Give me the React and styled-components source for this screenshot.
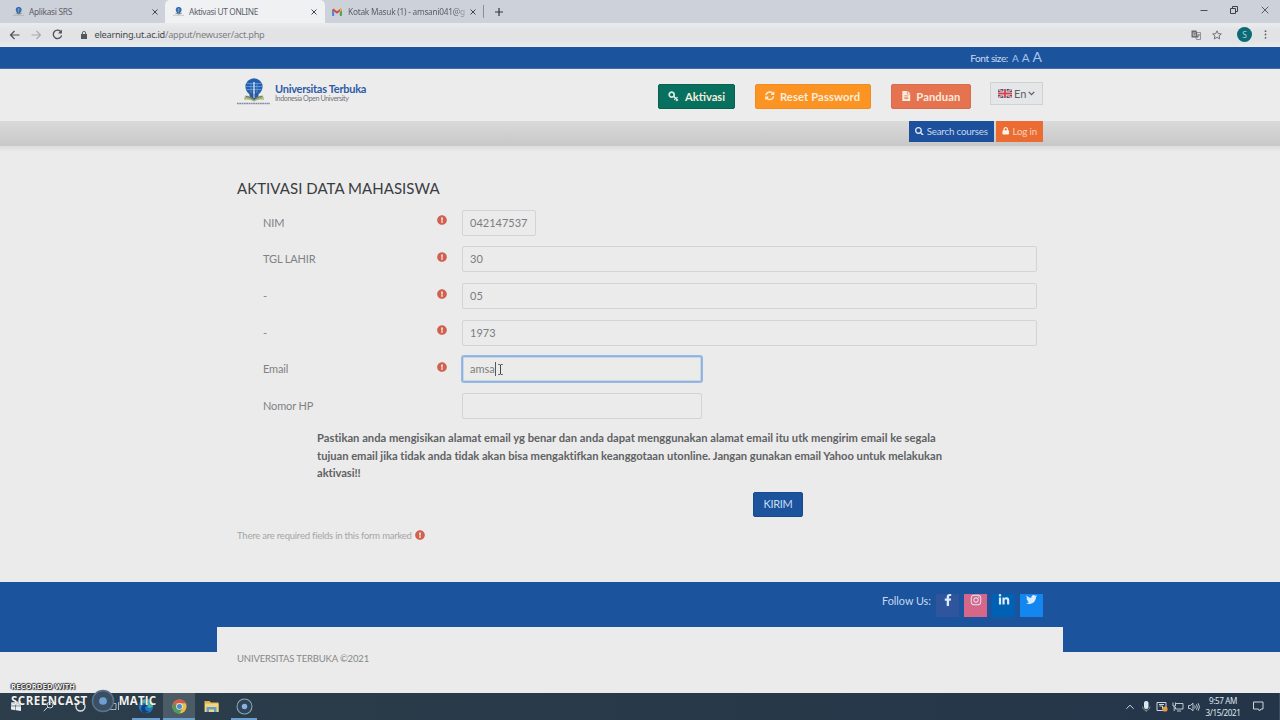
import React from "react";
import styled, { createGlobalStyle, css } from "styled-components";
import {
  FaSyncAlt,
  FaFileAlt,
  FaSearch,
  FaLock,
  FaExclamationCircle,
  FaFacebookF,
  FaInstagram,
  FaLinkedinIn,
  FaTwitter,
} from "react-icons/fa";

const BLUE = "#1b539d";

const GlobalStyle = createGlobalStyle`
  * { box-sizing: border-box; }
  body {
    margin: 0;
    background: #ebebeb;
    font-family: Lato, "Open Sans", sans-serif;
    overflow: hidden;
  }
  svg { display: block; flex: none; }
`;

const Screen = styled.div`
  position: relative;
  width: 1280px;
  height: 720px;
  display: flex;
  flex-direction: column;
  overflow: hidden;
`;

/* ---------- browser chrome ---------- */

const TabStrip = styled.div`
  display: flex;
  height: 23px;
  background: #cdd1da;
  font: 8.3px "Noto Sans", sans-serif;
  color: #5c6066;
`;

const Tab = styled.div`
  display: flex;
  align-items: center;
  width: ${(p) => p.$width}px;
  padding: 0 ${(p) => p.$end || 7}px 0 ${(p) => p.$pad}px;
  border-radius: ${(p) => (p.$active ? "5px 5px 0 0" : "0")};
  background: ${(p) => (p.$active ? "#eff1f3" : "transparent")};
`;

const TabTitle = styled.span`
  flex: 1;
  margin-left: ${(p) => p.$gap || 5}px;
  letter-spacing: ${(p) => p.$track || 0}px;
  white-space: nowrap;
  ${(p) =>
    p.$fade &&
    css`
      mask-image: linear-gradient(90deg, #000 86%, transparent 102%);
    `}
`;

const NewTab = styled.div`
  display: flex;
  align-items: center;
  gap: 11px;
  margin-left: 4px;
  &::before {
    content: "";
    width: 1px;
    height: 13px;
    background: #8b8f96;
  }
`;

const WindowButtons = styled.div`
  display: flex;
  align-items: center;
  gap: 22.5px;
  margin: 0 11.5px 4px auto;
`;

const Toolbar = styled.div`
  display: flex;
  align-items: center;
  height: 24px;
  padding: 0 13px 1px 9px;
  background: linear-gradient(#eaecee 0, #e2e3e5 30%, #e2e3e5 75%, #e9ebee);
`;

const NavIcons = styled.div`
  display: flex;
  align-items: center;
  gap: 10.5px;
`;

const Address = styled.div`
  display: flex;
  align-items: center;
  gap: 7.5px;
  flex: 1;
  margin-left: 18px;
  font: 9.2px "Noto Sans", sans-serif;
  color: #7c7f83;
  letter-spacing: -0.25px;
  b { font-weight: 400; color: #44484d; }
`;

const ToolIcons = styled.div`
  display: flex;
  align-items: center;
  gap: 11px;
`;

const Avatar = styled.div`
  display: grid;
  place-items: center;
  width: 15px;
  height: 15px;
  margin: 0 1px 0 4px;
  border-radius: 50%;
  background: #0b6a75;
  color: #a9d2d6;
  font: 8.5px "Noto Sans", sans-serif;
`;

/* ---------- page ---------- */

const Container = styled.div`
  display: flex;
  width: 806px;
  margin: 0 auto;
`;

const FontBar = styled.div`
  height: 22px;
  background: ${BLUE};
  border-bottom: 1px solid #416fa8;
`;

const FontSizes = styled.div`
  display: flex;
  align-items: baseline;
  gap: 3px;
  margin-left: auto;
  padding: 1px 1px 0 0;
  font-size: 10.2px;
  line-height: 17px;
  color: #c9d9ec;
  span { margin-right: 1px; letter-spacing: -0.45px; }
`;

const SizeLetter = styled.i`
  font-style: normal;
  font-size: ${(p) => p.$size}px;
  color: #a9c5ea;
`;

const Header = styled.header`
  height: 52px;
  background: #ececec;
`;

const Brand = styled.div`
  display: flex;
  gap: 5px;
  padding-top: 9px;
`;

const BrandText = styled.div`
  padding-top: 4px;
  white-space: nowrap;
  strong {
    display: block;
    font-size: 11px;
    line-height: 14px;
    letter-spacing: -0.27px;
    color: #2f5ba6;
  }
  span {
    display: block;
    font-size: 7.2px;
    line-height: 6px;
    letter-spacing: -0.4px;
    color: #74757b;
  }
`;

const HeaderActions = styled.div`
  display: flex;
  gap: 19.8px;
  margin-left: auto;
  padding-top: 15px;
`;

const ActionButton = styled.a`
  display: flex;
  align-items: center;
  justify-content: center;
  gap: ${(p) => p.$gap || 5}px;
  width: ${(p) => p.$width}px;
  height: 25px;
  padding-bottom: 1px;
  border: 1px solid ${(p) => p.$edge};
  border-radius: 2px;
  background: ${(p) => p.$color};
  color: #f8ecdd;
  font-size: 11.2px;
  font-weight: 700;
  letter-spacing: ${(p) => p.$track || 0}px;
  white-space: nowrap;
`;

const Language = styled.div`
  display: flex;
  align-items: center;
  justify-content: center;
  gap: 2px;
  width: 52.6px;
  height: 23px;
  margin-top: -2px;
  border: 1px solid #cfd1d2;
  background: #e5e6e7;
  color: #5d6064;
  font-size: 11px;
`;

const Band = styled.div`
  height: 31px;
  background: linear-gradient(#dadada 0, #c8c8c8 24.5px, #dedede 25.5px, #ebebeb 31px);
`;

const BandActions = styled.div`
  display: flex;
  gap: 2px;
  margin-left: auto;
`;

const BandButton = styled.a`
  display: flex;
  align-items: center;
  justify-content: center;
  gap: ${(p) => p.$gap}px;
  width: ${(p) => p.$width}px;
  height: 21px;
  padding-bottom: 1.5px;
  background: ${(p) => p.$color};
  color: ${(p) => p.$ink};
  font-size: 9.8px;
  letter-spacing: -0.22px;
  white-space: nowrap;
`;

const Main = styled.main`
  width: 806px;
  height: 430px;
  margin: 0 auto;
  padding-top: 26px;
`;

const Title = styled.h1`
  margin: 0 0 11.6px;
  font-size: 15px;
  line-height: 20px;
  font-weight: 400;
  letter-spacing: 0.05px;
  color: #3a3c3f;
`;

const Row = styled.div`
  display: grid;
  grid-template-columns: 174px 25px 1fr;
  height: 36.7px;
  margin: 0 6px 0 26px;
  color: #808284;
  font-size: 11px;
  line-height: 26px;
`;

const Label = styled.span`
  letter-spacing: -0.15px;
`;

const Required = styled.span`
  padding-top: 5.8px;
  color: #d2604f;
`;

const Field = styled.div`
  display: flex;
  align-items: center;
  width: ${(p) => p.$width}px;
  height: 26px;
  padding-left: 7px;
  border: 1px solid #d2d4d6;
  border-radius: 2px;
  color: #7b7d7f;
  ${(p) =>
    p.$focus &&
    css`
      border-color: #8fb0d8;
      background: #ebece9;
      box-shadow: 0 0 0 1px #9bb9de, inset 0 0 0 1px #c3d9f1;
    `}
`;

const Caret = styled.i`
  width: 1px;
  height: 14px;
  margin-right: 2px;
  background: #55585a;
`;

const Notice = styled.p`
  margin: -0.3px 0 0 80px;
  font-size: 11.2px;
  font-weight: 700;
  line-height: 17.3px;
  color: #606264;
  white-space: nowrap;
`;

const NoticeLine = styled.span`
  display: block;
  letter-spacing: ${(p) => p.$track}px;
`;

const Submit = styled.button`
  display: block;
  width: 50px;
  height: 25px;
  margin: 10.6px 0 0 516px;
  padding: 0 0 1px;
  border: 1px solid #174b90;
  border-radius: 2px;
  background: ${BLUE};
  color: #c9dcf3;
  font: 11px Lato, sans-serif;
  letter-spacing: -0.3px;
`;

const RequiredNote = styled.div`
  display: flex;
  align-items: center;
  gap: 3px;
  margin-top: 11px;
  font-size: 9.5px;
  line-height: 15px;
  letter-spacing: -0.22px;
  color: #a4a6a7;
  svg { color: #d2604f; }
`;

const Footer = styled.footer`
  height: 70px;
  background: ${BLUE};
`;

const FollowBar = styled.div`
  display: flex;
  justify-content: flex-end;
  width: 806px;
  height: 45px;
  margin: 0 auto;
  padding-top: 12px;
  gap: 5px;
  color: #c9daf0;
  font-size: 10.8px;
  line-height: 13px;
`;

const Social = styled.a`
  display: flex;
  justify-content: center;
  width: 23px;
  height: 23px;
  background: ${(p) => p.$color};
  color: #dcecff;
`;

const Copyright = styled.div`
  width: 846px;
  height: 67px;
  margin: 0 auto;
  padding: 24px 20px;
  background: #ebebeb;
  color: #86888a;
  font-size: 9.5px;
  line-height: 16px;
  letter-spacing: -0.17px;
`;

/* ---------- taskbar ---------- */

const Taskbar = styled.div`
  display: flex;
  align-items: stretch;
  height: 27px;
  margin-top: auto;
  position: relative;
  border-right: 1px solid #3d4d5f;
  background: linear-gradient(90deg, #2c3e4b, #283a49 50%, #24354a);
`;

const TaskItem = styled.div`
  display: flex;
  align-items: center;
  justify-content: center;
  width: ${(p) => p.$width}px;
  background: ${(p) => (p.$active ? "#4c5c67" : "transparent")};
  border-bottom: 2px solid ${(p) => (p.$open ? "#6b9fd0" : "transparent")};
  border-top: 1px solid transparent;
`;

const Tray = styled.div`
  display: flex;
  align-items: center;
  gap: 4px;
  margin-left: auto;
  padding-right: 15px;
`;

const Clock = styled.div`
  width: 36px;
  margin: 0 8px 0 1px;
  text-align: center;
  font: 8.1px/12px "Noto Sans", sans-serif;
  letter-spacing: -0.4px;
  color: #dfe5ea;
  white-space: nowrap;
`;

const Watermark = styled.div`
  position: absolute;
  left: 11px;
  top: 680px;
  color: #f2f2f2;
  font-family: "Open Sans", sans-serif;
  font-weight: 700;
  white-space: nowrap;
`;

const MarkSmall = styled.div`
  font-size: 7.6px;
  line-height: 12px;
  letter-spacing: 0.12px;
  text-shadow: 0 0 1px #222, 1px 1px 1px #222, -1px 0 1px #444, 0 -1px 1px #444;
`;

const MarkLarge = styled.div`
  display: flex;
  align-items: center;
  gap: 3.5px;
  height: 20px;
  margin-top: -1.5px;
  font-size: 11.5px;
  letter-spacing: 0.5px;
  text-shadow: 0 0 1px #222;
  span { letter-spacing: 0.2px; }
`;

/* ---------- drawings ---------- */

const CloseX = ({ size = 6, color = "#3d4148", weight = 1.3 }) => (
  <svg width={size} height={size} viewBox="0 0 8 8" stroke={color} strokeWidth={weight}>
    <path d="M.7.7l6.6 6.6M7.3.7L.7 7.3" />
  </svg>
);

const Emblem = ({ width, height }) => (
  <svg width={width} height={height} viewBox="0 0 33 28">
    <circle cx="17" cy="8.8" r="8.6" fill="#265fae" />
    <path d="M9.5 5.500h15M8.500 8.500h17M9.5 11.500h15" stroke="#6f9fd4" strokeWidth=".8" />
    <path d="M17 4v17" stroke="#cfe0f2" strokeWidth="1.4" />
    <path d="M14 6v9M20 6v9" stroke="#6f9fd4" strokeWidth=".7" />
    <path d="M12.500 15.500h9v5.500h-9z" fill="#2c5998" />
    <path d="M17 14v6" stroke="#cfe0f2" strokeWidth="1" />
    <path d="M8 17.500c4 0 7 2 9 4.500 2-2.500 5-4.500 9-4.500l1 4.500c-4-1-7 0-10 1.500C14 22 11 21 7 22z" fill="#a9b37c" />
    <path d="M9 18.500c3 .5 6 1.500 8 3.500 2-2 5-3 8-3.500" fill="none" stroke="#52655e" strokeWidth=".8" />
    <path d="M0 25.500h33" stroke="#8589a8" strokeWidth="1.500" strokeDasharray="1.800 .5" />
  </svg>
);

const KeyIcon = () => (
  <svg width="11" height="11" viewBox="0 0 11 11" fill="none" stroke="#d7ebe4">
    <circle cx="3.700" cy="3.700" r="2.500" strokeWidth="1.700" />
    <path d="M5.400 5.200l4.600 4.300" strokeWidth="1.600" />
    <path d="M7.200 7.600l-1.100 1.200M8.900 9l-1 1.200M8 7.500l1.600-1.400" strokeWidth="1.100" />
  </svg>
);

const Flag = () => (
  <svg width="14" height="9" viewBox="0 0 14 9">
    <path fill="#4a5579" d="M0 0h14v9H0z" />
    <path d="M0 0l14 9M14 0L0 9" stroke="#e4dfe5" strokeWidth="1.800" />
    <path d="M0 0l14 9M14 0L0 9" stroke="#c9505c" strokeWidth=".7" />
    <path d="M7 0v9M0 4.500h14" stroke="#eee6e8" strokeWidth="3.200" />
    <path d="M7 0v9M0 4.500h14" stroke="#d3444f" strokeWidth="1.800" />
  </svg>
);

const Gmail = () => (
  <svg width="10" height="8" viewBox="0 0 10 8">
    <path fill="#5484dc" d="M0 1.500l2.200 1.700V8H.8A.8.8 0 010 7.200z" />
    <path fill="#4ba35f" d="M10 1.500L7.800 3.200V8h1.400a.8.8 0 00.8-.8z" />
    <path d="M.8 1.200L5 4.600l4.200-3.400" fill="none" stroke="#d9493e" strokeWidth="1.900" />
    <path fill="#e8b53a" d="M7.900 1.200L9.200.3l.8.9v1.300L7.900 4z" />
  </svg>
);

const EdgeIcon = () => (
  <svg width="16" height="16" viewBox="0 0 16 16">
    <circle cx="8" cy="8" r="7.300" fill="#1f78c4" />
    <path d="M2 5C5-1 14 0 15 6.500c.5 3-3 4-5.500 3C11 7 8 4.500 5 5z" fill="#4fb89a" />
    <path d="M9 8c-3 0-3 5 2 5.500-5 3.500-9 0-7.500-4C4.500 6 8 5.500 9 8z" fill="#153f78" />
  </svg>
);

const ChromeIcon = () => (
  <svg width="15" height="15" viewBox="0 0 16 16">
    <circle cx="8" cy="8" r="7.500" fill="#e9bf45" />
    <path d="M8 8L1.500 4.250A7.500 7.500 0 008 15.500L11 10z" fill="#4c9a5c" />
    <path d="M4.800 4.500H14.600A7.500 7.500 0 008 .5 7.500 7.500 0 001.500 4.250L4.800 9.500z" fill="#d95a4c" />
    <circle cx="8" cy="8" r="3.500" fill="#e8edf2" />
    <circle cx="8" cy="8" r="2.700" fill="#4f8ad0" />
  </svg>
);

const FolderIcon = () => (
  <svg width="15" height="13" viewBox="0 0 15 13">
    <path d="M.5 1h5l1.500 1.500h7.500V12H.5z" fill="#e0b24a" />
    <path d="M1 3.500h13.500V12H1z" fill="#f3d57c" />
    <path d="M2.500 12V7h10v5H10V9.500H5V12z" fill="#5f9fd0" />
  </svg>
);

const RecorderIcon = ({ size, fill = "#2f4357", ring = "#8ba6bd", dot = "#86b4e0" }) => (
  <svg width={size} height={size} viewBox="0 0 18 18">
    <circle cx="9" cy="9" r="7.900" fill={fill} stroke={ring} strokeWidth="1.100" />
    <circle cx="9" cy="9" r="2.900" fill={dot} />
  </svg>
);

const ROWS = [
  { label: "NIM", value: "042147537", width: 74, required: true },
  { label: "TGL LAHIR", value: "30", width: 575, required: true },
  { label: "-", value: "05", width: 575, required: true },
  { label: "-", value: "1973", width: 575, required: true },
  { label: "Email", value: "amsa", width: 240, required: true, focus: true },
  { label: "Nomor HP", value: "", width: 240 },
];

export default function App() {
  return (
    <Screen>
      <GlobalStyle />
      <TabStrip>
        <Tab $width={165} $pad={13}>
          <Emblem width={11} height={11} />
          <TabTitle $track={-0.28}>Aplikasi SRS</TabTitle>
          <CloseX />
        </Tab>
        <Tab $width={160} $pad={8} $end={8} $active>
          <Emblem width={11} height={11} />
          <TabTitle $track={-0.38}>Aktivasi UT ONLINE</TabTitle>
          <CloseX />
        </Tab>
        <Tab $width={154} $pad={7} $end={3}>
          <Gmail />
          <TabTitle $gap={6} $track={-0.25} $fade>Kotak Masuk (1) - amsani041@g</TabTitle>
          <CloseX />
        </Tab>
        <NewTab>
          <svg width="8" height="8" viewBox="0 0 8 8" stroke="#33373d" strokeWidth="1.200">
            <path d="M4 0v8M0 4h8" />
          </svg>
        </NewTab>
        <WindowButtons>
          <svg width="8" height="8" viewBox="0 0 8 8" stroke="#4a4e55">
            <path d="M.5 4.500h7" />
          </svg>
          <svg width="8" height="8" viewBox="0 0 8 8" fill="none" stroke="#3d4148">
            <path d="M.5 2.500h5v5h-5zM2.500 2V.5h5v5H6" />
          </svg>
          <CloseX size={8} color="#4a4e55" weight={0.9} />
        </WindowButtons>
      </TabStrip>

      <Toolbar>
        <NavIcons>
          <svg width="11" height="10" viewBox="0 0 11 10" fill="none" stroke="#4d5156" strokeWidth="1.200">
            <path d="M10.500 5H1.500M5.500 1L1.500 5l4 4" />
          </svg>
          <svg width="11" height="10" viewBox="0 0 11 10" fill="none" stroke="#a7aaad" strokeWidth="1.100">
            <path d="M.5 5h9M5.500 1l4 4-4 4" />
          </svg>
          <svg width="11" height="11" viewBox="0 0 11 11" fill="none" stroke="#4d5156" strokeWidth="1.300">
            <path d="M9 3A4.200 4.200 0 109.600 6.300" />
            <path d="M9.900.6v3.800H6.100z" fill="#4d5156" stroke="none" />
          </svg>
        </NavIcons>
        <Address>
          <svg width="6" height="8" viewBox="0 0 6 8">
            <path d="M0 3h6v5H0z" fill="#55595e" />
            <path d="M1.400 3V2a1.600 1.600 0 013.200 0v1" fill="none" stroke="#55595e" strokeWidth=".9" />
          </svg>
          <span>
            <b>elearning.ut.ac.id</b>/apput/newuser/act.php
          </span>
        </Address>
        <ToolIcons>
          <svg width="10" height="10" viewBox="0 0 10 10">
            <path d="M3.500 2.500h6v7h-4z" fill="#e0e1e3" stroke="#7c7f83" strokeWidth=".8" />
            <path d="M.5.5h5l1.500 7H.5z" fill="#66696e" />
            <path d="M4.800 2.800H2.200v2.800h2.400V4.300H3.500" fill="none" stroke="#dfe0e2" strokeWidth=".7" />
            <path d="M6.500 5h2.500M7.900 4.200c0 2-.6 2.600-1 3.300" fill="none" stroke="#66696e" strokeWidth=".7" />
          </svg>
          <svg width="10" height="10" viewBox="0 0 12 12" fill="none" stroke="#5c6065">
            <path d="M6 1l1.500 3.400 3.700.3-2.800 2.400.9 3.600L6 8.800l-3.300 1.900.9-3.600L.8 4.700l3.700-.3z" />
          </svg>
          <Avatar>S</Avatar>
          <svg width="3" height="9" viewBox="0 0 3 9" fill="#5c6065">
            <circle cx="1.500" cy="1.200" r=".9" />
            <circle cx="1.500" cy="4.500" r=".9" />
            <circle cx="1.500" cy="7.800" r=".9" />
          </svg>
        </ToolIcons>
      </Toolbar>

      <FontBar>
        <Container>
          <FontSizes>
            <span>Font size:</span>
            <SizeLetter $size={10}>A</SizeLetter>
            <SizeLetter $size={11.5}>A</SizeLetter>
            <SizeLetter $size={14}>A</SizeLetter>
          </FontSizes>
        </Container>
      </FontBar>

      <Header>
        <Container>
          <Brand>
            <Emblem width={33} height={28} />
            <BrandText>
              <strong>Universitas Terbuka</strong>
              <span>Indonesia Open University</span>
            </BrandText>
          </Brand>
          <HeaderActions>
            <ActionButton $width={77} $color="#07705f" $edge="#08604f" $gap={6}>
              <KeyIcon />
              Aktivasi
            </ActionButton>
            <ActionButton $width={116} $color="#fc9423" $edge="#f08c20" $track={0.13}>
              <FaSyncAlt size={9.5} />
              Reset Password
            </ActionButton>
            <ActionButton $width={80} $color="#e57350" $edge="#d96c4b" $track={0.1}>
              <FaFileAlt size={10.5} />
              Panduan
            </ActionButton>
            <Language>
              <Flag />
              <span>En</span>
              <svg width="7" height="5" viewBox="0 0 7 5" fill="none" stroke="#55585c" strokeWidth="1.100">
                <path d="M.7.8l2.800 2.800L6.300.8" />
              </svg>
            </Language>
          </HeaderActions>
        </Container>
      </Header>

      <Band>
        <Container>
          <BandActions>
            <BandButton $width={85} $color="#1c4f9c" $ink="#c5d8f0" $gap={3}>
              <FaSearch size={8.5} color="#e2edfa" />
              Search courses
            </BandButton>
            <BandButton $width={47} $color="#ea6c33" $ink="#f7d0b9" $gap={3}>
              <FaLock size={7.5} color="#fff0e6" />
              Log in
            </BandButton>
          </BandActions>
        </Container>
      </Band>

      <Main>
        <Title>AKTIVASI DATA MAHASISWA</Title>
        {ROWS.map((r, i) => (
          <Row key={i}>
            <Label>{r.label}</Label>
            <Required>{r.required && <FaExclamationCircle size={10} />}</Required>
            <Field $width={r.width} $focus={r.focus}>
              {r.value}
              {r.focus && (
                <>
                  <Caret />
                  <svg width="5" height="11" viewBox="0 0 5 11" fill="none" stroke="#33363a" strokeWidth=".9">
                    <path d="M.3.500h1.500l.7.600.7-.6h1.500M2.500 1v9M.3 10.500h1.500l.7-.6.7.6h1.500" />
                  </svg>
                </>
              )}
            </Field>
          </Row>
        ))}
        <Notice>
          <NoticeLine $track={0.015}>
            Pastikan anda mengisikan alamat email yg benar dan anda dapat menggunakan alamat email itu utk mengirim email ke segala
          </NoticeLine>
          <NoticeLine $track={-0.028}>
            tujuan email jika tidak anda tidak akan bisa mengaktifkan keanggotaan utonline. Jangan gunakan email Yahoo untuk melakukan
          </NoticeLine>
          <NoticeLine $track={-0.05}>aktivasi!!</NoticeLine>
        </Notice>
        <Submit>KIRIM</Submit>
        <RequiredNote>
          There are required fields in this form marked
          <FaExclamationCircle size={10} />
        </RequiredNote>
      </Main>

      <Footer>
        <FollowBar>
          <span>Follow Us:</span>
          <Social $color="#2f559c"><FaFacebookF size={12} /></Social>
          <Social $color="#d76789"><FaInstagram size={12} /></Social>
          <Social $color="#0060b3"><FaLinkedinIn size={12} /></Social>
          <Social $color="#1486f0"><FaTwitter size={11} /></Social>
        </FollowBar>
        <Copyright>UNIVERSITAS TERBUKA ©2021</Copyright>
      </Footer>

      <Taskbar>
        <TaskItem $width={32}>
          <svg width="10" height="10" viewBox="0 0 10 10" fill="#e8edf0">
            <path d="M0 1.500l4.500-.7v4H0zM5 .7L10 0v4.800H5zM0 5.300h4.500v4L0 8.600zM5 5.300h5V10l-5-.7z" />
          </svg>
        </TaskItem>
        <TaskItem $width={32}>
          <svg width="11" height="11" viewBox="0 0 11 11" fill="none" stroke="#cfd6db">
            <circle cx="7" cy="4" r="3" />
            <path d="M4.800 6.200L.8 10" />
          </svg>
        </TaskItem>
        <TaskItem $width={32}>
          <svg width="11" height="11" viewBox="0 0 11 11" fill="none" stroke="#d9dfe3" strokeWidth="1.400">
            <circle cx="5.500" cy="5.500" r="4.500" />
          </svg>
        </TaskItem>
        <TaskItem $width={36}>
          <svg width="12" height="10" viewBox="0 0 12 10" fill="none" stroke="#aab4bb">
            <path d="M1 2.500h7v6H1zM10.500 1v8" />
          </svg>
        </TaskItem>
        <TaskItem $width={28} $open><EdgeIcon /></TaskItem>
        <TaskItem $width={3} />
        <TaskItem $width={32} $open $active><ChromeIcon /></TaskItem>
        <TaskItem $width={32}><FolderIcon /></TaskItem>
        <TaskItem $width={4} />
        <TaskItem $width={26} $open><RecorderIcon size={17} /></TaskItem>
        <Tray>
          <svg width="12" height="6" viewBox="-1.500 0 12 6" fill="none" stroke="#c9d1d8">
            <path d="M.8 4.800L4.500 1.200l3.700 3.600" />
          </svg>
          <svg width="12" height="11" viewBox="-1 0 12 11">
            <rect x="3" y="0" width="4.500" height="8" rx="2" fill="#dfe7ee" />
            <path d="M1.500 5.500c0 5 7.500 5 7.500 0M5.200 9v2" fill="none" stroke="#8fa0af" strokeWidth=".8" />
          </svg>
          <svg width="12" height="11" viewBox="0 0 12 11" fill="none" stroke="#cfd6dc">
            <path d="M1 1.500h9v8H1zM3 3.500h5M3.500 5h3v3" />
            <circle cx="9" cy="8" r="2.600" fill="#e79a3c" stroke="none" />
          </svg>
          <svg width="12" height="10" viewBox="0 0 12 10" fill="none" stroke="#cfd6dc" strokeWidth=".9">
            <path d="M4 1.500h7v5.500H3.500V5M1 .5v3.500h2.500V.5M2.200 4v5M5 9h4" />
          </svg>
          <svg width="12" height="10" viewBox="0 0 12 10" fill="none" stroke="#cfd6dc" strokeWidth=".9">
            <path d="M.5 3.500h1.800L5 1.200v7.600L2.300 6.500H.5zM6.700 3.500q1 1.500 0 3M8.400 2.300q2 2.700 0 5.400M10.100 1.200q2.700 3.800 0 7.600" />
          </svg>
          <Clock>
            <div>9:57 AM</div>
            <div>3/15/2021</div>
          </Clock>
          <svg width="11" height="11" viewBox="0 0 11 11" fill="none" stroke="#cfd6dc">
            <path d="M.5 1h9.500v7H8l-1.500 2L5.500 8h-5z" />
          </svg>
        </Tray>
      </Taskbar>

      <Watermark>
        <MarkSmall>RECORDED WITH</MarkSmall>
        <MarkLarge>
          SCREENCAST
          <RecorderIcon size={24} fill="#3a4f64" ring="#5d7389" dot="#6f9fd2" />
          <span>MATIC</span>
        </MarkLarge>
      </Watermark>
    </Screen>
  );
}
